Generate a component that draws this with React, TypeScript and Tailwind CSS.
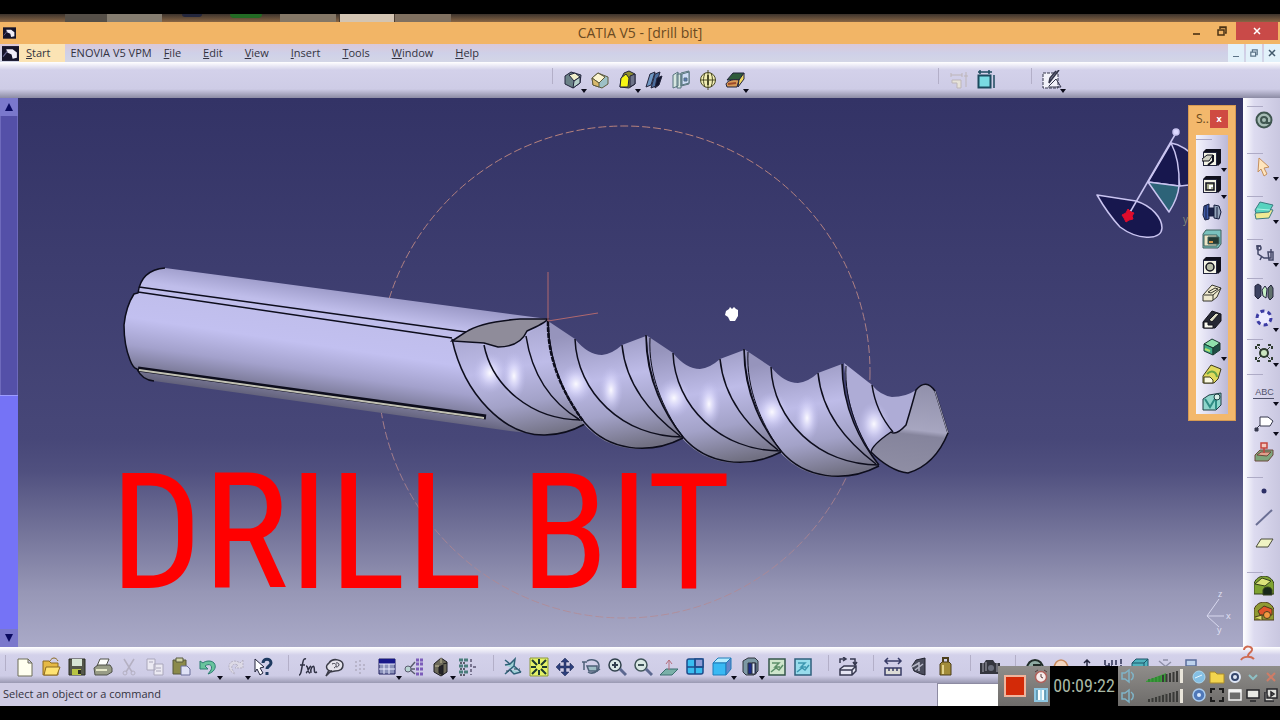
import type { ReactNode } from "react";

type Tool = { name: string; icon: ReactNode; menu?: boolean };

const INK = "#22243c";

function Block({ children }: { children?: ReactNode }) {
  return (
    <g>
      <path d="M1 4l3-3h15v14l-3 3z" fill="#10101c" />
      <rect x="1.500" y="4.500" width="13" height="13" fill="#f4f4e6" stroke="#22243c" />
      {children}
    </g>
  );
}

/* Toolbar icons */
const I = {
  box: (
    <g stroke={INK}>
      <path d="M2 6l6-4 10 3-1 8-7 5-8-4z" fill="#6b8288" />
      <path d="M6 5l6-2 5 4-6 4z" fill="#f0efcb" />
      <path d="M11 11l6-4v6l-7 5z" fill="#b4cfc8" />
    </g>
  ),
  boxOpen: (
    <g stroke="#5d5a3c">
      <path d="M2 8l6-5 10 4v7l-6 4-9-3z" fill="#9dc0c6" />
      <path d="M2 8l6-5 7 4-6 6z" fill="#fbf4cf" />
      <path d="M2 8l7 5v4l-6-2z" fill="#d8b96c" />
    </g>
  ),
  boxYellow: (
    <g stroke={INK}>
      <path d="M7 3l5-2 6 3v10l-6 4-9-1 1-8z" fill="#8d8d30" />
      <path d="M4 8l5-4 3 4-1 9H3z" fill="#f6f614" />
      <path d="M13 6l5-2v10l-5 3z" fill="#6d7388" />
    </g>
  ),
  slats: (
    <g stroke={INK}>
      <path d="M6 4l5-2-4 13-5 2z" fill="#6f97c2" />
      <path d="M11 4l5-2-4 14-5 2z" fill="#4a6c9c" />
      <path d="M13 8l5-2-3 9-4 3z" fill="#10142c" />
    </g>
  ),
  door: (
    <g stroke="#55727c" fill="#d6e6e0">
      <path d="M2 5l5-3v14l-5 2zM6 4h4v14H6zM10 3l8-2v13l-8 2z" />
      <path d="M11 4l7-2v11l-7 2z" fill="#cfdcf6" />
      <path d="M13 8h3v3h-3z" fill="#5b74c0" />
    </g>
  ),
  globe: (
    <g fill="none" stroke="#4b4b26">
      <circle cx="10" cy="10" r="7.500" fill="#f2eeb4" />
      <path d="M10 0v20M2 10h16M7 3c-2 5-2 9 0 14M13 3c2 5 2 9 0 14" />
      <path d="M10 5v10" strokeWidth="2" />
    </g>
  ),
  wedge: (
    <g stroke={INK}>
      <path d="M2 10l6-7h11l-5 7z" fill="#2f5b3c" />
      <path d="M1 14c2-4 8-5 13-4l-2 7-10 0z" fill="#d89a58" />
      <path d="M14 10l5-7v6l-6 8z" fill="#f0d862" />
      <path d="M3 14l8-1" stroke="#9c4a2c" strokeWidth="2" />
    </g>
  ),
  ghost: (
    <g fill="none" stroke="#bdb5b8">
      <path d="M2 5h11M2 3v4M13 3v4M17 2v15M15 6h4" />
      <path d="M3 10v3h5v5h4v-8z" fill="#e6e2d8" />
    </g>
  ),
  crate: (
    <g stroke="#1c4a5e" fill="#79dbe2">
      <rect x="2.500" y="5.500" width="12" height="12" strokeWidth="2" />
      <path d="M2 2h14M4 0v4M13 0v4M18 5v13" fill="none" strokeWidth="1.500" />
    </g>
  ),
  sketch: (
    <g stroke="#33354a" fill="none">
      <path d="M1 3h15v15H1z" fill="#f2f2fa" strokeDasharray="3 1" />
      <path d="M17 0l-7 9-3 4 1-5 6-7" strokeWidth="1.500" fill="#9a9cac" />
      <path d="M7 16l7-7 5 8H6" />
    </g>
  ),
  swirl: (
    <g fill="none" stroke="#3f5650" strokeWidth="2">
      <circle cx="10" cy="10" r="7.500" fill="#a5bcb5" />
      <circle cx="10" cy="10" r="3" />
      <path d="M13 8v5l3 0" />
    </g>
  ),
  arrow: <path d="M5 1l10 9-5 1 3 6-3 2-3-7-3 3z" fill="#ffe5bd" stroke="#c5905e" />,
  stack: (
    <g stroke="#3b7b80">
      <path d="M1 14l5-6 13 2-4 8-13 1z" fill="#efe994" />
      <path d="M1 10l5-8 13 3-4 7-13 1z" fill="#58d3bf" />
      <path d="M3 9l13 1" stroke="#aef2e4" />
    </g>
  ),
  axis: (
    <g fill="none" stroke="#444868" strokeWidth="1.500">
      <path d="M4 2v9l6 4h7V6M2 3h5M8 13l-2 4M14 9h5v8h-4z" />
      <circle cx="5" cy="5" r="2" />
    </g>
  ),
  mirror: (
    <g stroke={INK}>
      <path d="M1 4l3-2 3 2v10l-3 3-3-3z" fill="#3b4160" />
      <path d="M8 8l3-4 2 3-1 9-3-2z" fill="#c6f0c5" />
      <path d="M14 6l3-3 2 3v9l-3 3-2-3z" fill="#60716c" />
    </g>
  ),
  ring: (
    <circle cx="10" cy="10" r="7" fill="#ecebff" stroke="#3c3ca4" strokeWidth="3" strokeDasharray="4 3.300" />
  ),
  scale: (
    <g stroke="#2f3c30" strokeWidth="2" fill="none">
      <circle cx="10" cy="10" r="4" fill="#cbe5c0" />
      <path d="M2 6V2h4M14 2h4v4M18 14v4h-4M6 18H2v-4" strokeDasharray="3 2" />
      <path d="M4 4l3 3M16 4l-3 3M4 16l3-3M16 16l-3-3" strokeWidth="1" />
    </g>
  ),
  flag: (
    <g stroke="#36394c">
      <path d="M6 5h8l5 4-3 5H6z" fill="#fff" />
      <path d="M6 13l-4 4" />
      <path d="M1 16h3v3H1z" fill="#36394c" />
    </g>
  ),
  stamp: (
    <g stroke="#6d4a3c">
      <path d="M1 13l5-5h13v5l-5 6H1z" fill="#7ea57c" />
      <path d="M3 13l4-3h10l-4 4z" fill="#e0a08c" />
      <path d="M7 1h6v5H7zM10 6v5" fill="#f3c8be" stroke="#c5443c" strokeWidth="1.500" />
    </g>
  ),
  point: <circle cx="10" cy="10" r="2.500" fill="#2c2f66" />,
  line: <path d="M2 18L18 3" stroke="#6a6f94" strokeWidth="2" />,
  plane: <path d="M2 14l5-8h12l-5 8z" fill="#eff3c4" stroke="#4b4d3c" />,
  arch: (
    <g stroke="#34401c">
      <path d="M0 18V9c0-5 5-9 10-9s10 4 10 9v9z" fill="#7fa332" />
      <path d="M1 8l7-6 9 3-6 5z" fill="#dbe37a" />
      <path d="M9 19v-5c1-4 8-4 9 0v5z" fill="#17281a" />
    </g>
  ),
  archRed: (
    <g stroke="#4c3c1c">
      <path d="M0 18V9c0-5 5-9 10-9s10 4 10 9v9z" fill="#8f9a32" />
      <path d="M4 9l6-5 8 3v6H6z" fill="#e2552b" />
      <circle cx="13" cy="13" r="3.500" fill="#f29a42" />
      <path d="M1 15l7-2v5" fill="#dbd96a" />
    </g>
  ),
  draft: (
    <Block>
      <path d="M0 11l5-4h6l-4 6H0z" fill="#cfd0c2" stroke="#10101c" />
      <path d="M11 7v6l-5 4" stroke="#10101c" strokeWidth="2" fill="none" />
    </Block>
  ),
  shell: (
    <Block>
      <path d="M4 8h8v7H4z" fill="#a7ab8c" stroke="#10101c" strokeWidth="1.500" />
      <path d="M7 10h4v2H9v2H7z" fill="#fff" />
    </Block>
  ),
  thick: (
    <g stroke="#141c3c">
      <path d="M2 4l5-2v15l-4 1-2-5z" fill="#3f5ba8" />
      <path d="M7 6h5v8H7z" fill="#1b2246" />
      <path d="M12 3l5 1 2 6-2 7-5-1z" fill="#92a3b9" />
      <path d="M4 3v14M15 5v11" />
    </g>
  ),
  screen: (
    <g stroke="#3f605e">
      <path d="M1 5l3-4h15v14l-3 4H1z" fill="#79c1bd" />
      <path d="M2 6h13v11H2z" fill="#ece6c6" />
      <path d="M6 8h11v7H6z" fill="#243a33" />
      <path d="M7 13h4" stroke="#d69a4c" strokeWidth="2" />
    </g>
  ),
  hole: (
    <Block>
      <circle cx="8" cy="11" r="4" fill="#b8bda8" stroke="#10101c" strokeWidth="1.500" />
    </Block>
  ),
  rib: (
    <g stroke="#34342c">
      <path d="M1 12l9-10 9 3-4 9-5 4H1z" fill="#efe9ce" />
      <path d="M2 12h9l8-7M11 12v5M6 9l7-4 3 1-7 4z" fill="none" />
    </g>
  ),
  slot: (
    <g stroke="#14141c">
      <path d="M1 12L10 1l9 3v7l-6 7H1z" fill="#262834" />
      <path d="M2 12h4v3h5v3H2z" fill="#fbfbf0" />
      <path d="M7 10l7-7 3 1-7 8z" fill="#dcdcc4" />
    </g>
  ),
  cubeGreen: (
    <g stroke="#1c3c34">
      <path d="M2 7l8-5 8 4-7 5z" fill="#8fe0ac" />
      <path d="M2 7l9 4v7l-9-4z" fill="#3fa886" />
      <path d="M11 11l7-5v7l-7 5z" fill="#1d4c44" />
      <path d="M3 12l5 2" stroke="#b5e26c" strokeWidth="2" />
    </g>
  ),
  cubeGold: (
    <g stroke="#3d3b1c">
      <path d="M1 12L9 1l10 4-3 10-4 4H1z" fill="#e1d95d" />
      <path d="M2 13h6l3 3v3H2z" fill="#fbfae2" />
      <path d="M5 10c4-4 9-3 10 3" stroke="#68a344" strokeWidth="2" fill="none" />
    </g>
  ),
  cubeTeal: (
    <g stroke="#1f3f44">
      <path d="M1 8l6-4 12-2v12l-5 5H1z" fill="#8fd6cc" />
      <path d="M3 8l5 8 6-10v12" stroke="#2f8c84" strokeWidth="2" fill="none" />
      <circle cx="15" cy="6" r="3" fill="#d9efe9" />
    </g>
  ),
  file: <path d="M3 2h10l4 4v13H3zM13 2v4h4" fill="#fffff0" stroke="#6c6c58" />,
  folder: (
    <g stroke="#8c6a20">
      <path d="M2 4h6l2 2h7v12H2z" fill="#e6b944" />
      <path d="M5 10h14l-3 8H3z" fill="#ffe373" />
      <path d="M9 4c2-4 6-4 8 0" fill="none" />
    </g>
  ),
  save: (
    <g>
      <path d="M2 2h16v16H2z" fill="#55584a" stroke="#2b2d22" />
      <path d="M5 2h10v7H5z" fill="#d8e6d4" />
      <path d="M5 12h9v6H5z" fill="#b7c443" />
      <path d="M11 13h3v4h-3z" fill="#2b2d22" />
    </g>
  ),
  print: (
    <g stroke="#4e5148">
      <path d="M7 2h9l-3 7H4z" fill="#fdfdfb" />
      <path d="M1 11l4-3h12l2 3v4l-5 3H2z" fill="#989c86" />
      <path d="M3 13h11" stroke="#e5e7c8" strokeWidth="2" />
    </g>
  ),
  cut: (
    <g stroke="#b4b0c2" fill="none">
      <path d="M5 2l8 13M15 2L7 15" strokeWidth="1.500" />
      <circle cx="6" cy="16" r="2" />
      <circle cx="14" cy="16" r="2" />
    </g>
  ),
  copy: <path d="M2 2h8v11H2zM9 7h9v11H9zM11 11h5M11 14h5M4 5h4" fill="#ebe9f2" stroke="#a9a6ba" />,
  paste: (
    <g stroke="#57583c">
      <path d="M2 3h13v14H2z" fill="#8b8a4a" />
      <path d="M5 1h7v4H5z" fill="#d3d6a8" />
      <path d="M10 9h6l3 3v6h-9z" fill="#dfe2f6" stroke="#6a6f9a" />
    </g>
  ),
  undo: <path d="M2 4v8h8l-3-3c4-3 8-1 6 4l-3 4c10-3 9-13 1-13-3 0-5 1-6 2z" fill="#68c49d" stroke="#2d7c72" />,
  redo: <path d="M17 3v8H9l3-3C8 6 5 8 6 12l3 5C1 14 1 5 8 4c3 0 5 1 6 2z" fill="#dddae6" stroke="#b5b1c3" strokeDasharray="2 1" />,
  help: (
    <g>
      <path d="M2 2l9 8-4 1 3 5-3 2-3-6-2 3z" fill="#fdfdff" stroke={INK} />
      <path d="M10 6c0-5 8-5 8 0 0 3-4 3-4 6M14 15v3" fill="none" stroke="#1e3a60" strokeWidth="3" />
    </g>
  ),
  formula: (
    <path
      d="M8 2C5 1 5 5 4 10s-1 8-3 8M2 8h5M8 9c3 0 1 7 4 7M13 9c-2 1-3 6-5 7M13 16c-1-5 2-8 3-6s-1 7 3 5"
      fill="none"
      stroke="#2f3144"
      strokeWidth="1.500"
    />
  ),
  speech: (
    <g fill="#e5e4ec" stroke="#3a3b47" strokeWidth="1.500">
      <path d="M8 14c-6 0-7-5-3-8 4-6 14-3 14 2 0 5-4 6-8 6l-5 1-4 4 3-6" />
      <path d="M8 7c4-2 6 2 2 4M12 6c4-1 4 4 0 4" fill="none" strokeWidth="1" />
    </g>
  ),
  dots: <path d="M6 4v12M10 3v14M14 7v6" stroke="#b0acc0" strokeWidth="1.500" strokeDasharray="2 2" />,
  table: (
    <g>
      <path d="M2 2h16v15H2z" fill="#8c93bb" stroke="#1c1d5c" />
      <path d="M2 2h16v5H2z" fill="#17188a" />
      <path d="M2 7h16M2 12h16M7 7v10M12 7v10" stroke="#e8eaff" />
    </g>
  ),
  graph: (
    <g fill="none" stroke="#5a5d6e">
      <path d="M5 12l6-7M5 12h6M5 12l6 5" strokeWidth="1.500" />
      <circle cx="4" cy="12" r="3" fill="#b9d4d3" />
      <path d="M12 3h7M12 7h7M12 12h7M12 17h7" stroke="#7c5cba" strokeWidth="3" strokeDasharray="3 1" />
    </g>
  ),
  blocks: (
    <g stroke="#1c1c20">
      <path d="M3 7l7-6 6 4v10l-6 4-7-4z" fill="#6d6a5a" />
      <path d="M8 10l4-2v10l-4-2zM12 7l4-1" fill="#232228" />
      <path d="M10 1v5M4 9h4" stroke="#c3bb9a" />
    </g>
  ),
  rows: (
    <g strokeWidth="2" fill="none">
      <path d="M1 3h9M1 9h9M1 15h9" stroke="#4b7e7c" strokeWidth="3" strokeDasharray="4 1" />
      <path d="M2 6h6M2 12h6M2 18h6" stroke="#5d5e6c" strokeDasharray="2 1" />
      <path d="M13 2v16M15 10h5" stroke="#77738f" strokeDasharray="3 2" />
    </g>
  ),
  fly: (
    <g stroke="#2f6178" fill="#9fd2d6">
      <path d="M2 3l5 4M2 8l5-1 5-5-1 7 7 6M2 17l9-8M6 12l5 5 7-2" strokeWidth="1.500" />
      <path d="M3 14h6M11 12h6" stroke="#26455a" strokeDasharray="3 2" />
    </g>
  ),
  fit: (
    <g>
      <path d="M1 1h18v18H1z" fill="#e4f268" stroke="#8c9a3c" />
      <path d="M3 3l5 5M17 3l-5 5M3 17l5-5M17 17l-5-5M10 2v5M10 13v5M2 10h5M13 10h5" stroke="#1c3b30" strokeWidth="2" />
    </g>
  ),
  pan: (
    <path d="M10 1l4 4h-3v4h4V6l4 4-4 4v-3h-4v4h3l-4 4-4-4h3v-4H5v3l-4-4 4-4v3h4V5H6z" fill="#2c3f7c" stroke="#1c2850" strokeWidth="0.500" />
  ),
  rotate: (
    <g fill="none" stroke="#4d6078" strokeWidth="1.500">
      <path d="M1 5h5M3 5v8M6 4c6-3 12 0 12 5s-7 9-11 6" />
      <path d="M6 9h10v5H8z" fill="#9dbcc4" />
      <path d="M13 16l6-4" />
    </g>
  ),
  zoomIn: (
    <g fill="none" stroke="#30404c">
      <circle cx="8" cy="8" r="6" fill="#d9e8e4" strokeWidth="1.500" />
      <path d="M5 8h6M8 5v6" strokeWidth="2" />
      <path d="M13 12l6 6" stroke="#5c6890" strokeWidth="3" />
    </g>
  ),
  zoomOut: (
    <g fill="none" stroke="#3f5458">
      <circle cx="8" cy="8" r="6" fill="#d9e8e4" strokeWidth="1.500" />
      <path d="M5 8h6" strokeWidth="2" />
      <path d="M13 12l6 6" stroke="#5c6890" strokeWidth="3" />
    </g>
  ),
  normal: (
    <g stroke="#3c6f70">
      <path d="M1 18l6-6h12l-6 6z" fill="#79b0a8" />
      <path d="M10 13V3l-3 4M10 3l3 4" stroke="#b56e7c" fill="none" />
    </g>
  ),
  window: (
    <g stroke="#1d4b8a" strokeWidth="1.500">
      <rect x="2" y="2" width="16" height="15" rx="2" fill="#39bdf0" />
      <path d="M10 2v8h8V2z" fill="#8f9cd6" />
      <path d="M2 10h16M10 2v15" />
    </g>
  ),
  cubeBlue: (
    <g stroke="#1f7cba">
      <path d="M1 6l5-5h13l-5 5z" fill="#b5ecff" />
      <path d="M1 6h13v12H1z" fill="#39b9f3" />
      <path d="M14 6l5-5v11l-5 6z" fill="#6585c8" />
    </g>
  ),
  cylinder: (
    <g stroke="#31353f">
      <path d="M3 4l5-3h7l3 3v10l-4 4H6l-3-3z" fill="#7c98a4" />
      <path d="M8 6h8v11H8z" fill="#1b2d86" />
      <path d="M12 6h3v11h-3z" fill="#d6e2f6" />
    </g>
  ),
  image: (
    <g stroke="#34564a">
      <path d="M2 2h16v16H2z" fill="#cfe6cc" strokeWidth="1.500" />
      <path d="M4 15l5-4 3 2 4-5M5 6h7l-4 4h5" fill="none" stroke="#5c8f68" strokeWidth="1.500" />
    </g>
  ),
  imageBlue: (
    <g stroke="#2f5f7c">
      <path d="M2 2h16v16H2z" fill="#98dcec" strokeWidth="1.500" />
      <path d="M4 15l5-4 3 2 4-5M5 6h7l-4 4h5" fill="none" stroke="#3c96b0" strokeWidth="1.500" />
    </g>
  ),
  swap: (
    <g fill="none" stroke="#373950" strokeWidth="1.500">
      <path d="M2 6V2h6M5 4l3-2-3-2M12 2h5v5M15 5l2 3 2-3" />
      <path d="M2 12l4-3h12v5l-4 4H2zM2 13h12v5M14 13l4-4" fill="#e5e5f3" />
    </g>
  ),
  ruler: (
    <g fill="none" stroke="#373b66" strokeWidth="1.500">
      <path d="M2 4h16M5 1L2 4l3 3M15 1l3 3-3 3" />
      <path d="M2 11h16v7H2zM6 11v3M10 11v3M14 11v3" fill="#dcdcd6" />
    </g>
  ),
  measure: (
    <g stroke="#22232f">
      <path d="M3 9l4-6 9-2v17l-4-1-7-3z" fill="#4a4c5c" />
      <path d="M3 10l7-4M10 5v9M6 13l8-6" stroke="#b6b7c7" strokeWidth="1.500" fill="none" />
    </g>
  ),
  weight: (
    <g stroke="#4c3f1a">
      <path d="M8 1h5v5H8z" fill="none" strokeWidth="2" />
      <path d="M5 7l2-2h7l2 2v11H5z" fill="#a28c39" />
      <path d="M8 8v9" stroke="#e2d28b" strokeWidth="2" />
    </g>
  ),
  camera: (
    <g>
      <path d="M0 6h4l2-3h7l2 3h5v11H0z" fill="#34353e" />
      <circle cx="11" cy="11" r="3" fill="#6b6e7c" />
      <path d="M3 6v9M6 5v9M17 6v9" stroke="#a6a6b0" />
    </g>
  ),
  dome: (
    <g stroke="#202c28">
      <path d="M2 12c0-12 16-12 16 0z" fill="#8eaaa2" strokeWidth="2" />
      <path d="M8 8h8" strokeWidth="2" />
    </g>
  ),
  sun: <path d="M3 12C3 0 17 0 17 12z" fill="#f3d5bf" stroke="#c88a5c" strokeWidth="1.500" />,
  up: <path d="M10 18V3M7 6l3-3 3 3" fill="none" stroke={INK} strokeWidth="1.500" />,
  bars: <path d="M2 3v12M6 6v9M9 3v12M13 3v12M18 2v13M2 9h7" stroke="#2d3052" strokeWidth="1.500" strokeDasharray="5 1" />,
  cubeSea: (
    <g stroke="#1d5568">
      <path d="M3 6l4-4h12v9l-3 6H3z" fill="#4fb2bd" />
      <path d="M3 6h12v11M15 6l4-4" fill="none" />
    </g>
  ),
  probe: <path d="M4 4l12 10M16 5L5 14M8 3h5" stroke="#8f90a8" strokeWidth="1.500" />,
  pin: <path d="M5 3h10v6H5zM10 9v8" fill="#bdd1ec" stroke="#5a6c9a" strokeWidth="1.500" />,
};

const topTools: Tool[][] = [
  [
    { name: "Pad", icon: I.box, menu: true },
    { name: "Shaft", icon: I.boxOpen },
    { name: "Fillet", icon: I.boxYellow, menu: true },
    { name: "Draft", icon: I.slats },
    { name: "Split", icon: I.door },
    { name: "Sphere", icon: I.globe },
    { name: "Surface", icon: I.wedge, menu: true },
  ],
  [
    { name: "Constraint", icon: I.ghost },
    { name: "Constraints box", icon: I.crate },
  ],
  [{ name: "Sketch", icon: I.sketch, menu: true }],
];

const bottomTools: Tool[][] = [
  [
    { name: "New", icon: I.file },
    { name: "Open", icon: I.folder },
    { name: "Save", icon: I.save },
    { name: "Print", icon: I.print },
    { name: "Cut", icon: I.cut },
    { name: "Copy", icon: I.copy },
    { name: "Paste", icon: I.paste },
    { name: "Undo", icon: I.undo, menu: true },
    { name: "Redo", icon: I.redo, menu: true },
    { name: "What's this", icon: I.help },
  ],
  [
    { name: "Formula", icon: I.formula },
    { name: "Comment", icon: I.speech },
    { name: "Links", icon: I.dots },
    { name: "Design table", icon: I.table, menu: true },
    { name: "Relations", icon: I.graph },
    { name: "Catalog", icon: I.blocks, menu: true },
    { name: "Parameters", icon: I.rows },
  ],
  [
    { name: "Fly mode", icon: I.fly },
    { name: "Fit all in", icon: I.fit },
    { name: "Pan", icon: I.pan },
    { name: "Rotate", icon: I.rotate },
    { name: "Zoom in", icon: I.zoomIn },
    { name: "Zoom out", icon: I.zoomOut },
    { name: "Normal view", icon: I.normal },
    { name: "Multi view", icon: I.window },
    { name: "Isometric view", icon: I.cubeBlue, menu: true },
    { name: "Shading", icon: I.cylinder, menu: true },
    { name: "Hide and show", icon: I.image },
    { name: "Swap visible space", icon: I.imageBlue },
  ],
  [{ name: "Turntable", icon: I.swap }],
  [
    { name: "Measure between", icon: I.ruler },
    { name: "Measure item", icon: I.measure },
    { name: "Measure inertia", icon: I.weight },
  ],
  [{ name: "Capture", icon: I.camera }],
  [
    { name: "Render", icon: I.dome },
    { name: "Light", icon: I.sun },
    { name: "Lift", icon: I.up },
    { name: "Analysis", icon: I.bars },
    { name: "Body", icon: I.cubeSea },
    { name: "Probe", icon: I.probe },
    { name: "Pin", icon: I.pin },
  ],
];

const panelTools: Tool[] = [
  { name: "Draft angle", icon: I.draft, menu: true },
  { name: "Shell", icon: I.shell, menu: true },
  { name: "Thickness", icon: I.thick },
  { name: "Thread", icon: I.screen },
  { name: "Hole", icon: I.hole },
  { name: "Rib", icon: I.rib },
  { name: "Slot", icon: I.slot },
  { name: "Stiffener", icon: I.cubeGreen, menu: true },
  { name: "Multi-sections solid", icon: I.cubeGold },
  { name: "Removed solid", icon: I.cubeTeal },
];

const sideTools: { className: string; tools: Tool[] }[] = [
  { className: "py-1 pb-3", tools: [{ name: "Part design", icon: I.swirl }] },
  { className: "py-2", tools: [{ name: "Select", icon: I.arrow, menu: true }] },
  { className: "py-2", tools: [{ name: "Layers", icon: I.stack, menu: true }] },
  { className: "py-2", tools: [{ name: "Axis system", icon: I.axis, menu: true }] },
  {
    className: "py-1",
    tools: [
      { name: "Mirror", icon: I.mirror },
      { name: "Pattern", icon: I.ring, menu: true },
    ],
  },
  { className: "py-1", tools: [{ name: "Scale", icon: I.scale, menu: true }] },
  {
    className: "pt-1 pb-2 gap-1",
    tools: [
      { name: "Text with leader", icon: null, menu: true },
      { name: "Flag note", icon: I.flag, menu: true },
      { name: "Apply material", icon: I.stamp },
    ],
  },
  {
    className: "py-1",
    tools: [
      { name: "Point", icon: I.point },
      { name: "Line", icon: I.line },
      { name: "Plane", icon: I.plane },
    ],
  },
  {
    className: "pt-3",
    tools: [
      { name: "Close surface", icon: I.arch },
      { name: "Sew surface", icon: I.archRed },
    ],
  },
];

const menus = ["File", "Edit", "View", "Insert", "Tools", "Window", "Help"];

function ToolButton({ tool, className }: { tool: Tool; className: string }) {
  return (
    <button aria-label={tool.name} className={`relative flex shrink-0 items-center justify-center ${className}`}>
      {tool.icon ? (
        <svg viewBox="0 0 20 20" className="size-5">
          {tool.icon}
        </svg>
      ) : (
        <span className="border-b border-[#50526c] pl-0.5 font-['Liberation_Sans'] text-[9px] leading-3 text-[#50526c]">
          ABC
        </span>
      )}
      {tool.menu && (
        <svg viewBox="0 0 6 4" className="absolute -right-px -bottom-px h-1 w-1.5">
          <path d="M0 0h6L3 4z" fill="#0a0a18" />
        </svg>
      )}
    </button>
  );
}

function ToolGroup({ tools, pitch }: { tools: Tool[]; pitch?: string }) {
  return (
    <div className="flex shrink-0 items-center">
      <span className="mr-1.5 h-4 w-px self-start bg-[#b3afc8]" />
      {tools.map((t) => (
        <ToolButton key={t.name} tool={t} className={`h-6 ${pitch ?? (t.menu ? "w-7" : "w-[26px]")}`} />
      ))}
    </div>
  );
}

/* One turn of the flute; repeated along the drill axis */
function Flute({ x, y }: { x: number; y: number }) {
  return (
    <g transform={`translate(${x} ${y})`}>
      <path
        d="M548 321L575 339Q588 355 602 355Q612 354 622 345L646 336Q646 360 653 380Q662 410 683 437Q643 459 605 441Q585 430 573 409Q549 370 548 321Z"
        fill="url(#flute)"
      />
      <ellipse cx="576" cy="384" rx="17" ry="20" fill="url(#shine)" />
      <ellipse cx="611" cy="390" rx="12" ry="24" fill="url(#shine)" />
      <g fill="none" stroke="#0d0d1c" strokeWidth="1.500">
        <path d="M575 339C577 392 622 437 683 437" />
        <path d="M622 345C626 385 650 413 680 436" />
        <path d="M646 336C646 380 665 415 683 437" />
        <path d="M650 338C648 375 664 410 680 433" strokeWidth="1" />
        <path d="M548 321C549 372 573 409 585 423C608 450 648 456 683 438" />
      </g>
    </g>
  );
}

function Scene() {
  return (
    <svg viewBox="18 98 1225 549" preserveAspectRatio="xMinYMin meet" className="absolute inset-0 size-full">
      <defs>
        <linearGradient id="shank" gradientUnits="userSpaceOnUse" x1="330" y1="287" x2="312" y2="409">
          <stop offset="0" stopColor="#9a98c6" />
          <stop offset="0.180" stopColor="#bfbdea" />
          <stop offset="0.480" stopColor="#c2c0f0" />
          <stop offset="0.700" stopColor="#a3a1cc" />
          <stop offset="0.870" stopColor="#7b7a98" />
          <stop offset="1" stopColor="#57566e" />
        </linearGradient>
        <linearGradient id="flute" gradientUnits="userSpaceOnUse" x1="600" y1="330" x2="622" y2="450">
          <stop offset="0" stopColor="#9694bc" />
          <stop offset="0.400" stopColor="#bebce8" />
          <stop offset="0.700" stopColor="#a3a2c8" />
          <stop offset="1" stopColor="#717082" />
        </linearGradient>
        <linearGradient id="firstTurn" gradientUnits="userSpaceOnUse" x1="502" y1="320" x2="524" y2="440">
          <stop offset="0" stopColor="#a5a3cc" />
          <stop offset="0.400" stopColor="#bebce8" />
          <stop offset="0.700" stopColor="#a3a2c8" />
          <stop offset="1" stopColor="#717082" />
        </linearGradient>
        <radialGradient id="shine">
          <stop offset="0" stopColor="#fbfaff" />
          <stop offset="0.400" stopColor="#e2e0ff" stopOpacity="0.700" />
          <stop offset="1" stopColor="#c0beee" stopOpacity="0" />
        </radialGradient>
        <linearGradient id="tip" gradientUnits="userSpaceOnUse" x1="918" y1="386" x2="908" y2="473">
          <stop offset="0" stopColor="#9291ac" />
          <stop offset="0.500" stopColor="#a7a6c0" />
          <stop offset="0.560" stopColor="#85849c" />
          <stop offset="1" stopColor="#8f8ea4" />
        </linearGradient>
        <linearGradient id="orbit" x1="0" y1="0" x2="0" y2="1">
          <stop offset="0" stopColor="#b8827c" />
          <stop offset="0.750" stopColor="#a07c8c" />
          <stop offset="1" stopColor="#b08f9c" />
        </linearGradient>
      </defs>

      {/* Rotation circle */}
      <circle cx="624" cy="372" r="246" fill="none" stroke="url(#orbit)" strokeDasharray="8 3" />

      {/* Shank */}
      <path
        d="M165 268L548 319L560 420L545 435L510 431L154 381Q142 380 137 369Q133 368 130 360Q124 345 124 325Q126 306 134 294L138 293Q141 270 165 268Z"
        fill="url(#shank)"
      />
      <path d="M165 268Q141 270 138 293L134 294Q126 306 124 325Q124 345 130 360Q133 368 137 369Q142 380 154 381" fill="none" stroke="#0d0d1c" strokeWidth="1.500" />
      <path d="M139 287L466 332M138 292L452 338" stroke="#0d0d1c" strokeWidth="1.500" />
      <path d="M138 369L486 417" stroke="#0d0d1c" strokeWidth="5" />
      <path d="M139 370L484 418" stroke="#c2c2b4" strokeWidth="2" />

      {/* First turn, running out into the shank */}
      <path d="M452 339L484 345L513 346L526 335L548 321Q549 375 585 423Q565 435 545 435Q475 430 452 339Z" fill="url(#firstTurn)" />
      <ellipse cx="490" cy="373" rx="17" ry="20" fill="url(#shine)" />
      <ellipse cx="514" cy="376" rx="12" ry="24" fill="url(#shine)" />
      <path d="M452 341L466 332Q480 322 520 319L548 319Q545 323 527 331Q520 347 498 347L484 343Z" fill="#8f8c9a" stroke="#0d0d1c" strokeWidth="1.500" />
      <g fill="none" stroke="#0d0d1c" strokeWidth="1.500">
        <path d="M452 339C464 395 505 436 545 435Q565 435 585 424" />
        <path d="M484 345C492 385 530 420 582 420" />
        <path d="M526 336C532 375 550 402 580 420" />
      </g>

      {/* Last turn before the tip */}
      <path d="M844 363L872 385Q880 395 892 397Q906 397 916 390Q913 415 905 428L893 435L873 455Q848 420 844 363Z" fill="#aeacd6" />
      <ellipse cx="874" cy="424" rx="16" ry="22" fill="url(#shine)" />
      <path d="M872 385Q876 412 893 432" fill="none" stroke="#0d0d1c" strokeWidth="1.500" />

      <Flute x={196} y={28} />
      <Flute x={98} y={14} />
      <Flute x={0} y={0} />
      <path d="M548 321C547 372 575 409 583 421" fill="none" stroke="#0d0d1c" strokeWidth="2.500" strokeDasharray="5 1" />

      <path
        d="M916 390Q926 378 935 391L948 433Q935 465 908 473Q890 471 871 452Q872 445 891 432Q896 436 906 425Q912 405 916 390Z"
        fill="url(#tip)"
        stroke="#0d0d1c"
        strokeWidth="1.500"
      />
      <path d="M935 391L948 433" fill="none" stroke="#9c9bb2" />

      {/* Model axes */}
      <path d="M548 272V321L598 313" fill="none" stroke="#b0686e" />

      {/* Hand cursor */}
      <path d="M726 311l3-2 1-2 2 2 2-2 2 2 2 1v6l-3 5h-5l-2-4-3-2z" fill="#fff" />

      {/* Compass */}
      <g stroke="#c9c4f0" strokeWidth="1.500" strokeLinejoin="round">
        <path d="M1171 143Q1184 145 1198 160V184L1180 186Z" fill="#1c1c52" />
        <path d="M1148 182L1171 143Q1180 160 1179 186Z" fill="#17174e" />
        <path d="M1148 182L1179 186Q1178 198 1169 212Z" fill="#2d6378" />
        <path d="M1097 195L1136 201C1152 206 1162 218 1162 228C1161 242 1136 239 1120 227Q1108 214 1097 195Z" fill="#17174e" />
        <path d="M1129 214L1176 133" />
        <circle cx="1176" cy="132" r="3" fill="#dcd8ff" />
      </g>
      <path d="M1128 209l3 3 3 1-2 3 1 3-4 1-3 2-2-4-2-3 4-2z" fill="#e00c2c" stroke="#e00c2c" />

      {/* Absolute axes */}
      <g fill="none" stroke="#d8d8ee">
        <path d="M1219 599L1207 616L1219 627M1207 616H1224" />
      </g>
      <g className="font-['Open_Sans',sans-serif] text-[9px]" fill="#e2e2f4">
        <text x="1218" y="597">z</text>
        <text x="1226" y="619">x</text>
        <text x="1217" y="633">y</text>
      </g>
      <text x="1183" y="223" fill="#8a8a78" className="font-['Open_Sans',sans-serif] text-[10px]">y</text>
    </svg>
  );
}

function Logo({ className }: { className: string }) {
  return (
    <svg viewBox="0 0 16 14" className={className}>
      <path d="M0 0h16v14H0z" fill="#15142a" />
      <path d="M4 3h6l4 3v5l-4 1-1-4-4-2z" fill="#f0edf8" />
      <path d="M1 10l4-5" stroke="#6a6896" />
    </svg>
  );
}

function PartPanel() {
  return (
    <section className="absolute top-[7px] right-[7px] w-12 border border-[#d79a52] bg-[#f3b86c] px-[7px] pb-1.5">
      <header className="flex h-[29px] items-center justify-between pb-1">
        <span className="font-['Open_Sans',sans-serif] text-xs text-[#6c4c20]">S..</span>
        <button aria-label="Close panel" className="flex size-[18px] items-center justify-center bg-[#cf4a42] text-[9px] leading-none font-bold text-white">
          x
        </button>
      </header>
      <div className="flex flex-col items-center bg-linear-to-r from-[#f4f3fc] via-[#d9d7ee] to-[#bcb9d6] pt-1">
        <span className="mb-1 h-px w-4 self-start bg-[#a9a6c4]" />
        {panelTools.map((t) => (
          <ToolButton key={t.name} tool={t} className="h-[27px] w-7" />
        ))}
      </div>
    </section>
  );
}

function Meter({ lit }: { lit?: boolean }) {
  const bars = [3, 4, 5, 6, 7, 8, 9, 10, 11];
  return (
    <svg viewBox="0 0 66 18" className="h-[18px] w-[66px]">
      <g fill="none" stroke="#7fb4c8" strokeWidth="1.500">
        <path d="M4 6h3l4-3v12l-4-3H4zM13 5c3 2 3 6 0 8" />
      </g>
      <path d="M28 14L48 6v9H28z" fill={lit ? "#3d9c3c" : "#6e6e6a"} />
      {bars.map((h, i) => (
        <rect key={h} x={30 + i * 3.5} y={15 - h} width="2" height={h} fill={lit && i < 4 ? "#2f8a32" : "#3a3a38"} />
      ))}
      <rect x="62" y="2" width="3" height="14" fill="#e9e5da" />
    </svg>
  );
}

function Recorder() {
  const small = "flex size-[18px] items-center justify-center";
  return (
    <aside className="absolute right-0 bottom-0 flex h-10 items-center bg-linear-to-b from-[#8f8d8a] to-[#6e6c6a]">
      <button aria-label="Stop recording" className="ml-1.5 size-[22px] border-2 border-[#f0b49c] bg-[#d32a08]" />
      <div className="ml-1.5 flex flex-col">
        <button aria-label="Timer" className={small}>
          <svg viewBox="0 0 16 16" className="size-4">
            <circle cx="8" cy="8" r="5.500" fill="#f7eceb" stroke="#b0605a" strokeWidth="1.500" />
            <path d="M8 5v3l2 1M2 3l3-2M14 3l-3-2" stroke="#5a3c3c" fill="none" />
          </svg>
        </button>
        <button aria-label="Pause" className={small}>
          <svg viewBox="0 0 16 16" className="size-4">
            <path d="M1 1h14v14H1z" fill="#8ec7e2" />
            <path d="M6 3v10M10 3v10" stroke="#f8ffff" strokeWidth="2.500" />
            <path d="M4 3v10M12 3v10" stroke="#34708c" />
          </svg>
        </button>
      </div>
      <time className="flex h-full w-[68px] items-center justify-center bg-black font-['Roboto_Condensed','Liberation_Sans',sans-serif] text-lg text-[#a9b8a4]">
        00:09:22
      </time>
      <div className="flex flex-col gap-0.5">
        <Meter lit />
        <Meter />
      </div>
      <div className="ml-1.5 grid grid-cols-5">
        <button aria-label="Zoom" className={small}>
          <svg viewBox="0 0 16 16" className="size-4"><circle cx="8" cy="8" r="6" fill="#84bfe4" stroke="#a9d6ee" /><path d="M4 9l7-3" stroke="#e9f8ff" /></svg>
        </button>
        <button aria-label="Open folder" className={small}>
          <svg viewBox="0 0 16 16" className="size-4"><path d="M1 3h5l2 2h7v9H1z" fill="#f2d44e" stroke="#a98a2a" /></svg>
        </button>
        <button aria-label="Settings" className={small}>
          <svg viewBox="0 0 16 16" className="size-4"><circle cx="8" cy="8" r="5" fill="#34466c" stroke="#dde5f4" strokeWidth="2" /><circle cx="8" cy="8" r="2" fill="#dde5f4" /></svg>
        </button>
        <button aria-label="Minimise recorder" className={small}>
          <svg viewBox="0 0 16 16" className="size-4"><path d="M4 6l4 4 4-4" fill="none" stroke="#8ec0c4" strokeWidth="2" /></svg>
        </button>
        <button aria-label="Close recorder" className={small}>
          <svg viewBox="0 0 16 16" className="size-4"><path d="M4 4l8 8M12 4l-8 8" stroke="#cf7c66" strokeWidth="2" /></svg>
        </button>
        <button aria-label="Webcam" className={small}>
          <svg viewBox="0 0 16 16" className="size-4"><circle cx="8" cy="8" r="6" fill="#4f78b8" stroke="#a9cbee" strokeWidth="1.500" /><circle cx="8" cy="8" r="2" fill="#d6e8ff" /></svg>
        </button>
        <button aria-label="Full screen" className={small}>
          <svg viewBox="0 0 16 16" className="size-4"><path d="M2 6V2h4M10 2h4v4M14 10v4h-4M6 14H2v-4" fill="none" stroke="#1c1c1c" strokeWidth="2" /></svg>
        </button>
        <button aria-label="Window region" className={small}>
          <svg viewBox="0 0 16 16" className="size-4"><path d="M2 3h12v10H2z" fill="#6d6d6d" stroke="#f4f4f4" strokeWidth="1.500" /><path d="M2 4h12" stroke="#f4f4f4" strokeWidth="3" /></svg>
        </button>
        <button aria-label="Screen" className={small}>
          <svg viewBox="0 0 16 16" className="size-4"><path d="M2 3h12v8H2zM5 14h6" fill="#e8e8e4" stroke="#26262a" strokeWidth="1.500" /></svg>
        </button>
        <button aria-label="Screen list" className={small}>
          <svg viewBox="0 0 16 16" className="size-4"><path d="M4 2h10v9H4zM2 5v9h9M8 5v4l3-2z" fill="#dededa" stroke="#26262a" strokeWidth="1.500" /></svg>
        </button>
      </div>
    </aside>
  );
}

export default function App() {
  return (
    <main className="flex h-screen flex-col overflow-hidden bg-black py-3.5 font-['Open_Sans','Noto_Sans',sans-serif]">
      {/* Sliver of the desktop taskbar */}
      <div className="flex h-2 shrink-0 bg-linear-to-b from-[#3c332c] to-[#8a6644]">
        <div className="w-[65px]" />
        <div className="w-[42px] bg-[#554f48]" />
        <div className="w-[55px] bg-[#857d70]" />
        <div className="ml-5 h-[3px] w-5 rounded-b-full bg-[#23263c]" />
        <div className="ml-7 h-1 w-8 rounded-b-full bg-[#226a24]" />
        <div className="ml-[18px] w-14 bg-[#847766]" />
        <div className="ml-[3px] w-14 border-x border-[#4a3c30] bg-[#d3c4b2]" />
        <div className="w-14 bg-[#807060]" />
      </div>

      {/* Title bar */}
      <header className="relative flex h-[22px] shrink-0 items-center bg-[#f2b566]">
        <Logo className="ml-[3px] h-3 w-[13px]" />
        <h1 className="flex-1 pr-4 text-center text-sm leading-5 text-[#6b4a22]">CATIA V5 - [drill bit]</h1>
        <div className="absolute top-0 right-0.5 flex h-[18px]">
          <button aria-label="Minimise" className="flex w-6 items-center justify-center">
            <span className="mt-1.5 h-0.5 w-[7px] bg-[#6b4a22]" />
          </button>
          <button aria-label="Restore" className="flex w-7 items-center justify-center">
            <svg viewBox="0 0 10 10" className="size-2.5">
              <path d="M1 4h6v5H1zM3 3V1h6v6H8M1 4h6M3 1.500h6" fill="none" stroke="#4a3214" strokeWidth="1.500" />
            </svg>
          </button>
          <button aria-label="Close" className="flex w-[42px] items-center justify-center bg-[#c94a48]">
            <svg viewBox="0 0 8 8" className="size-2">
              <path d="M1 1l6 6M7 1L1 7" stroke="#fff" strokeWidth="1.500" />
            </svg>
          </button>
        </div>
      </header>

      {/* Menu bar */}
      <nav className="flex h-[18px] shrink-0 items-stretch bg-linear-to-b from-[#dac8d8] via-[#cfd0e8] to-[#d3d6e6] text-[11px] leading-[18px] text-[#33323e]">
        <Logo className="ml-0.5 h-[15px] w-[17px] self-center" />
        <button className="bg-[#fbe3b4] pr-3.5 pl-[7px]">
          <u>S</u>tart
        </button>
        <button className="pr-px pl-1.5 whitespace-nowrap">ENOVIA V5 VPM</button>
        {menus.map((m) => (
          <button key={m} className="px-[11px]">
            <u>{m[0]}</u>
            {m.slice(1)}
          </button>
        ))}
        <div className="ml-auto flex gap-0.5">
          <button aria-label="Minimise document" className="flex w-4 items-center justify-center bg-[#e2f1fa]">
            <span className="mt-1.5 h-px w-1.5 bg-[#5b7386]" />
          </button>
          <button aria-label="Restore document" className="flex w-4 items-center justify-center bg-[#e2f1fa]">
            <svg viewBox="0 0 10 10" className="size-2">
              <path d="M1 4h6v5H1zM3 3V1h6v6H8" fill="none" stroke="#5b7386" strokeWidth="1.500" />
            </svg>
          </button>
          <button aria-label="Close document" className="flex w-4 items-center justify-center bg-[#e2f1fa]">
            <svg viewBox="0 0 8 8" className="size-2">
              <path d="M1 1l6 6M7 1L1 7" stroke="#41586b" strokeWidth="1.500" />
            </svg>
          </button>
        </div>
      </nav>

      {/* Upper toolbar */}
      <div className="flex h-9 shrink-0 items-start bg-[linear-gradient(#ffffff_0%,#d3d1ea_22%,#cecce6_75%,#8c8ba4_100%)] pt-1.5">
        <div className="ml-[43%] flex pl-0.5">
          <ToolGroup tools={topTools[0]} pitch="w-[27px]" />
        </div>
        <div className="ml-[190px] flex">
          <ToolGroup tools={topTools[1]} pitch="w-[27px]" />
        </div>
        <div className="ml-8 flex">
          <ToolGroup tools={topTools[2]} pitch="w-[27px]" />
        </div>
      </div>

      <div className="flex min-h-0 flex-1">
        {/* Tree scroll bar */}
        <div className="flex w-[18px] shrink-0 flex-col bg-[#5450a8]">
          <button aria-label="Scroll up" className="flex h-[18px] items-center justify-center bg-[#7a78cc]">
            <svg viewBox="0 0 8 8" className="size-2"><path d="M4 0l4 8H0z" fill="#0a0a60" /></svg>
          </button>
          <div className="flex flex-1 flex-col">
            <div className="flex-[280] border-x border-[#6e6abc]" />
            <div className="flex-[233] border-t border-[#9c9cff] bg-[#7573f6]" />
          </div>
          <button aria-label="Scroll down" className="flex h-[18px] items-center justify-center bg-[#7a78cc]">
            <svg viewBox="0 0 8 8" className="size-2"><path d="M0 0h8L4 8z" fill="#0a0a60" /></svg>
          </button>
        </div>

        {/* 3D view */}
        <section className="relative flex-1 overflow-hidden bg-[linear-gradient(#333366_0%,#474778_62%,#50507f_68%,#77779c_80%,#9797b6_90%,#aaaac8_100%)]">
          <Scene />
          <p className="absolute top-[343px] left-[92px] font-['Roboto_Condensed','Roboto',sans-serif] text-[162px] leading-[184px] whitespace-nowrap text-[#ff0000]">
            DRILL BIT
          </p>
          <PartPanel />
        </section>

        {/* Side toolbar */}
        <div className="flex w-[37px] shrink-0 flex-col bg-linear-to-r from-white via-[#dddbf0] via-30% to-[#c9c7e0] pt-1 pl-1">
          {sideTools.map((g) => (
            <div key={g.tools[0].name} className={`flex flex-col items-center ${g.className}`}>
              <span className="h-px w-4 self-start bg-[#aeabc6]" />
              {g.tools.map((t) => (
                <ToolButton key={t.name} tool={t} className="h-[26px] w-7" />
              ))}
            </div>
          ))}
        </div>
      </div>

      {/* Lower toolbar, status line and recorder */}
      <footer className="relative shrink-0">
        <div className="flex h-9 items-start gap-3 overflow-hidden bg-[linear-gradient(#ffffff_0%,#d3d1ea_22%,#cecce6_80%,#9a99b2_100%)] pt-2 pl-[5px]">
          {bottomTools.map((g) => (
            <ToolGroup key={g[0].name} tools={g} />
          ))}
        </div>
        <div className="flex h-[23px] items-center bg-[#cfcce4] pl-[3px] text-[11px] text-[#33323e]">
          <label htmlFor="command" className="flex-1">
            Select an object or a command
          </label>
          <input id="command" className="mr-[281px] h-full w-[62px] border-t border-l border-[#8d8ba2] bg-white px-1 outline-none" />
        </div>
        <svg viewBox="0 0 16 20" className="absolute -top-0.5 right-6 h-5 w-4">
          <path d="M4 5c0-5 9-4 8 0-1 3-4 3-4 6M1 15c2-4 10-4 13-1" fill="none" stroke="#cf6a50" strokeWidth="2" />
        </svg>
        <Recorder />
      </footer>
    </main>
  );
}
